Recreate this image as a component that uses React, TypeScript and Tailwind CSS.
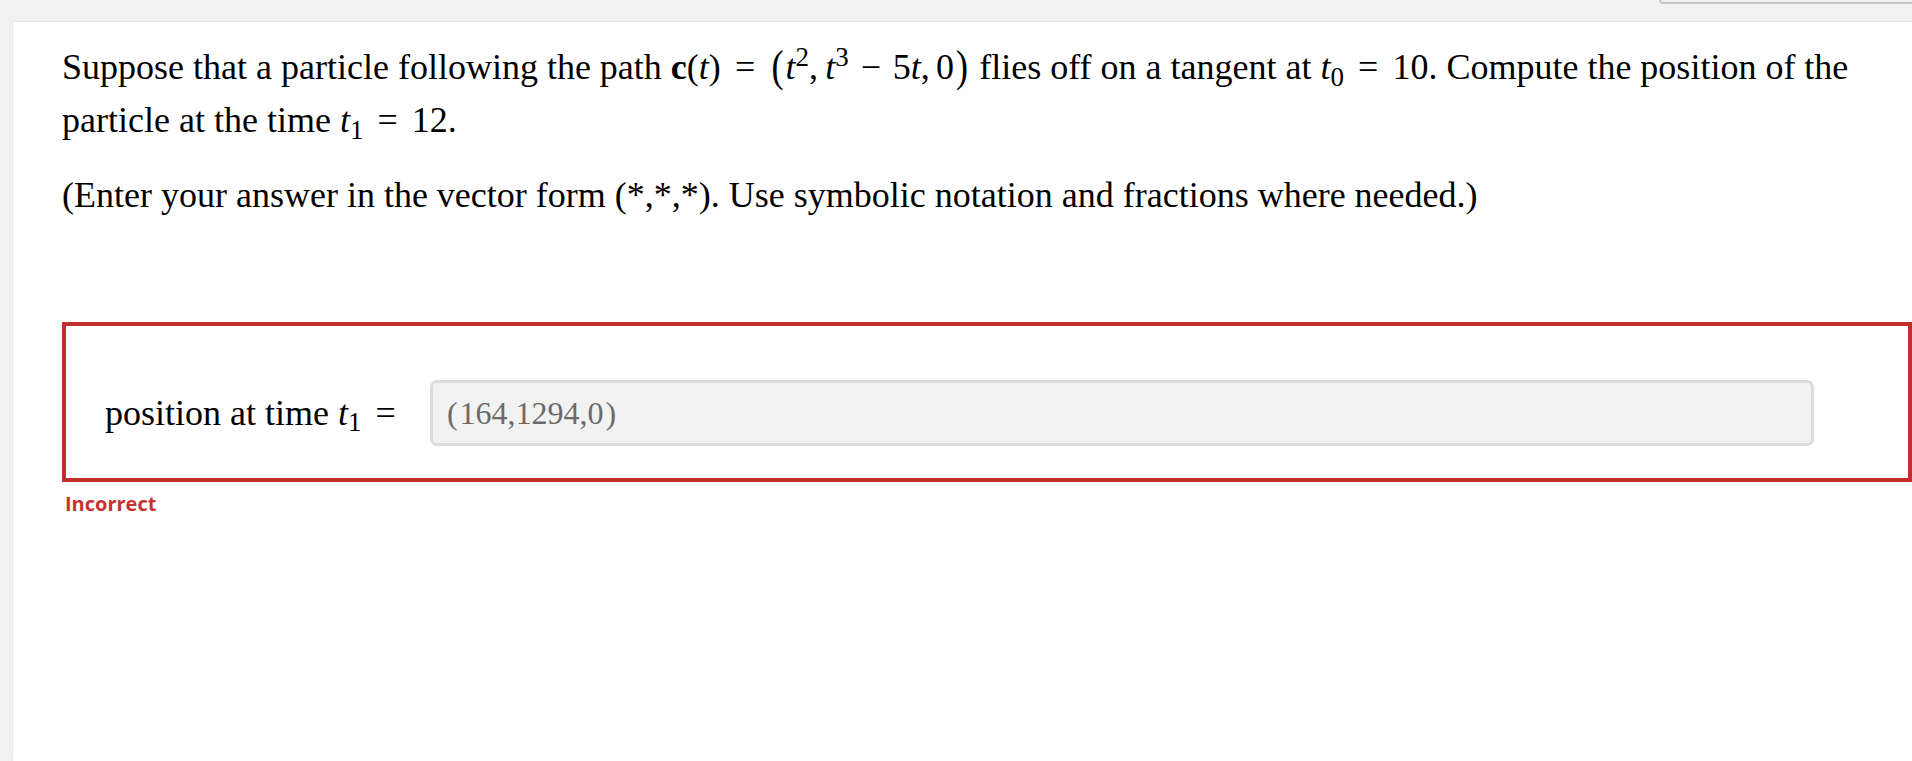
import React from "react";

const T = () => <i className="italic">t</i>;

const Eq = () => <span className="mx-[0.39em]">=</span>;

const BigParen = ({ ch }: { ch: string }) => (
  <span className="inline-block mx-[0.06em] scale-y-125 origin-[50%_60%] font-light">{ch}</span>
);

export default function App() {
  return (
    <div className="min-h-screen bg-[#f2f2f2] font-['Liberation_Serif',serif] text-black overflow-hidden">
      {/* top strip with the clipped toolbar edge */}
      <div className="h-[22px] flex justify-end">
        <div className="w-[253px] h-[4px] border-l-2 border-b-2 border-[#c6c6c6] rounded-bl-[5px]" />
      </div>

      {/* question card */}
      <div className="ml-[13px] bg-white min-h-[739px] pl-[49px] pr-[48px] pt-[19px] shadow-[0_0_2px_rgba(0,0,0,0.15)]">
        <p className="text-[36px] leading-[53px]">
          Suppose that a particle following the path{" "}
          <span className="whitespace-nowrap">
            <b className="font-bold">c</b>(<T />)
            <Eq />
            <BigParen ch="(" />
            <T />
            <sup>2</sup>,<span className="ml-[0.2em]" />
            <T />
            <sup>3</sup>
            <span className="mx-[0.33em]">−</span>5<T />,<span className="ml-[0.17em]" />0
            <BigParen ch=")" />
          </span>{" "}
          flies off on a tangent at{" "}
          <span className="whitespace-nowrap">
            <T />
            <sub>0</sub>
            <Eq />
            10.
          </span>{" "}
          Compute the position of the particle at the time{" "}
          <span className="whitespace-nowrap">
            <T />
            <sub>1</sub>
            <Eq />
            12.
          </span>
        </p>

        <p className="mt-[22px] text-[36px] leading-[53px]">
          (Enter your answer in the vector form (*,*,*). Use symbolic notation and fractions where needed.)
        </p>

        {/* answer box, runs out to the right edge of the window */}
        <div className="mt-[100px] -mr-[48px] border-4 border-[#c1302f] pl-[39px] pr-[94px] pt-[54px] pb-[32px] flex items-center gap-[20px]">
          <span className="text-[36px] leading-[53px] whitespace-nowrap">
            position at time <T />
            <sub>1</sub>
            <Eq />
          </span>
          <div className="flex-1 h-[66px] border-[3px] border-[#dcdcdc] rounded-[7px] bg-[#f2f2f2] flex items-center pl-[14px] text-[32px] text-[#6b6b6b]">
            <span className="mr-[2px]">(</span>164,1294,0<span className="ml-[2px]">)</span>
          </div>
        </div>

        <div className="mt-[8px] ml-[3px] font-['Open_Sans',sans-serif] font-bold text-[20px] leading-[28px] text-[#c8312f]">
          Incorrect
        </div>
      </div>
    </div>
  );
}
